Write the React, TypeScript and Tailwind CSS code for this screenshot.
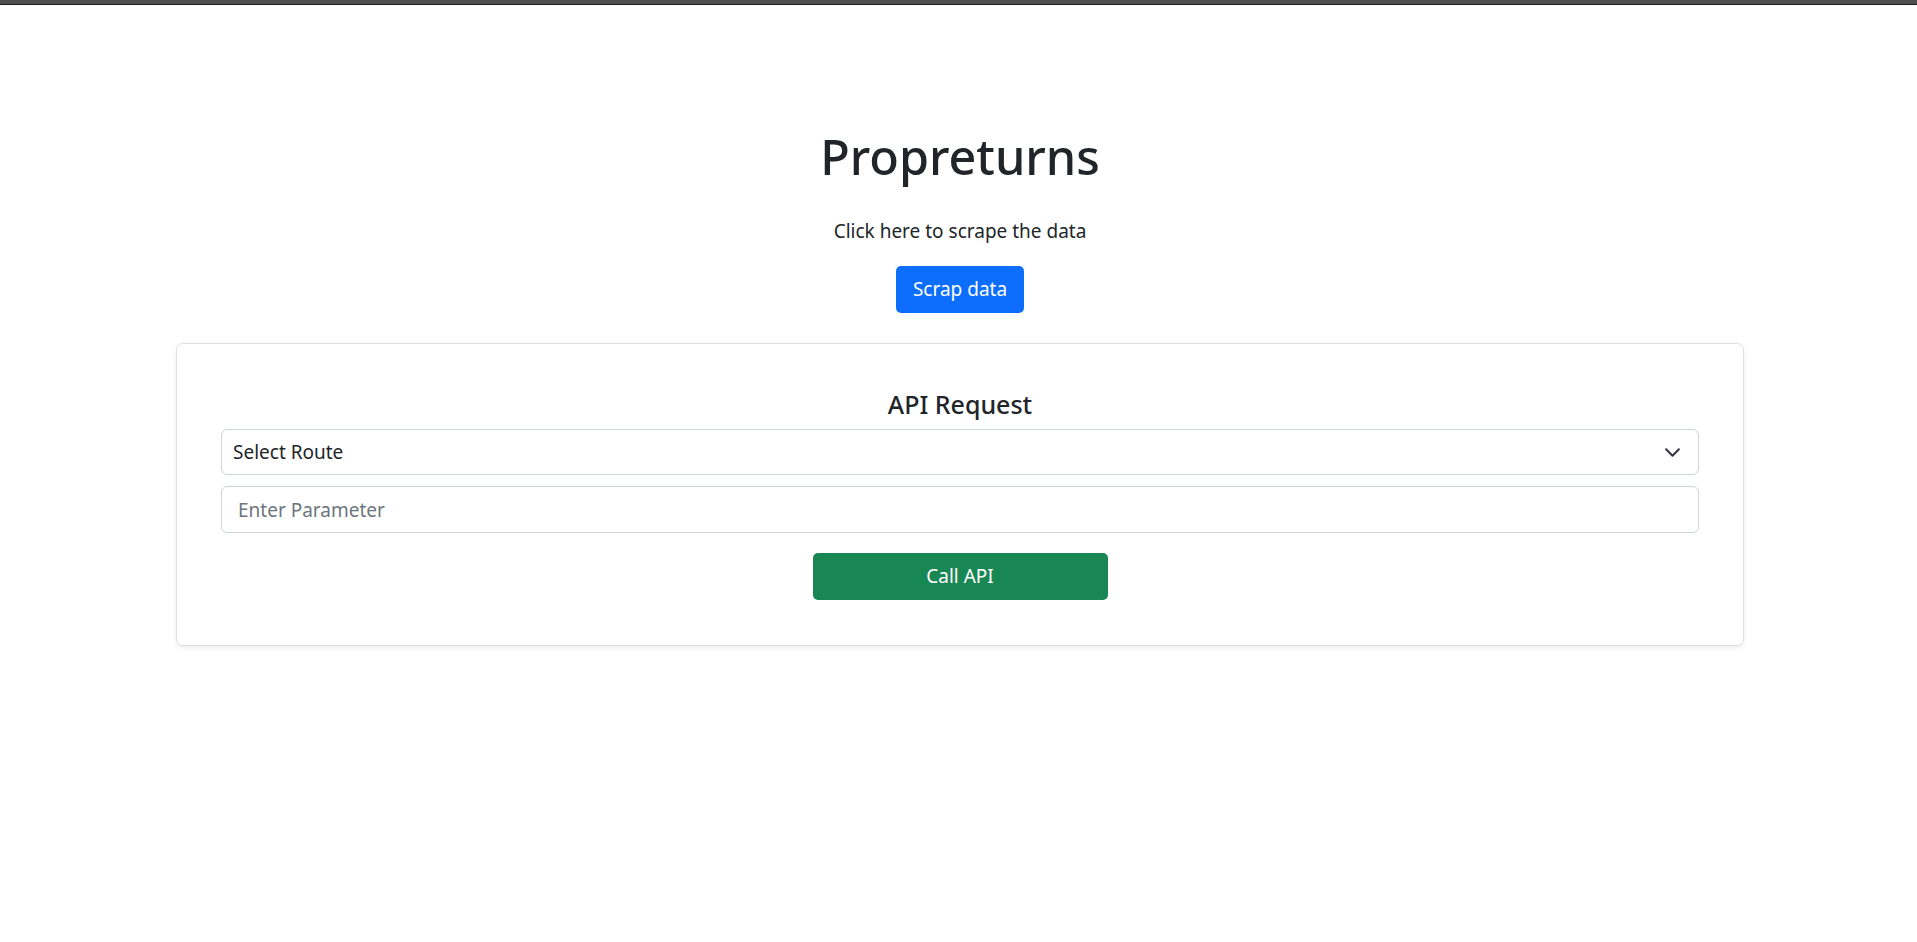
export default function App() {
  return (
    <div className="min-h-screen bg-white font-['Noto_Sans',sans-serif] text-[#212529]">
      <div className="h-[5px] border-b border-[#1b1b1b] bg-[#4f4f4f]" />

      <main className="flex flex-col items-center pl-[3px]">
        <h1 className="mt-[123px] text-[48.5px] leading-[57.6px] font-medium">
          Propreturns
        </h1>
        <p className="mt-[31px] text-[19px] leading-[28.5px]">
          Click here to scrape the data
        </p>
        <button className="mt-[21px] h-[47px] w-[128px] rounded-[5px] bg-[#0d6efd] text-[19px] text-white">
          Scrap data
        </button>

        <section className="mt-[30px] w-[1568px] rounded-[7px] border border-[#dfdfdf] bg-white px-[44px] pt-[45px] pb-[45px] shadow-[0_2px_5px_rgba(0,0,0,0.075)]">
          <h4 className="text-center text-[25px] leading-[30px] font-medium">
            API Request
          </h4>

          <div className="mt-[10px] flex h-[46px] items-center justify-between rounded-[6px] border border-[#ced4da] pl-[11px] pr-[17px] text-[19px]">
            <span>Select Route</span>
            <svg width="17" height="13" viewBox="0 0 16 12" fill="none">
              <path
                d="M2 3l6 6 6-6"
                stroke="#343a40"
                strokeWidth="2"
                strokeLinecap="round"
                strokeLinejoin="round"
              />
            </svg>
          </div>

          <input
            className="mt-[11px] block h-[47px] w-full rounded-[6px] border border-[#ced4da] px-[16px] text-[19px] outline-none placeholder:text-[#6c757d]"
            placeholder="Enter Parameter"
          />

          <div className="mt-[20px] flex justify-center">
            <button className="h-[47px] w-[295px] rounded-[5px] bg-[#198754] text-[19px] text-white">
              Call API
            </button>
          </div>
        </section>
      </main>
    </div>
  );
}
